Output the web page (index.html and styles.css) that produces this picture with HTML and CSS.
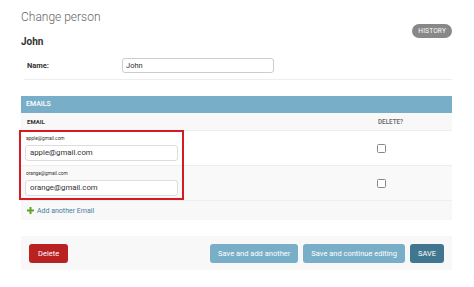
FILE: index.html
```html
<!DOCTYPE html>
<html lang="en">
<head>
<meta charset="UTF-8">
<meta name="viewport" content="width=device-width, initial-scale=1.0">
<title>Change person</title>
<link rel="stylesheet" href="styles.css">
</head>
<body>
  <div id="content">
    <div class="page-head">
      <div>
        <h1>Change person</h1>
        <h2>John</h2>
      </div>
      <a class="history" href="#">HISTORY</a>
    </div>

    <div class="form-row">
      <label class="field-label">Name:</label>
      <input class="name-input" type="text" value="John">
    </div>

    <div class="inline-group">
      <div class="module-head">EMAILS</div>
      <div class="col-head">
        <span class="col-email">EMAIL</span>
        <span class="col-delete">DELETE?</span>
      </div>
      <div class="rows">
        <div class="highlight"></div>
        <div class="email-row">
          <div class="email-cell">
            <div class="original">apple@gmail.com</div>
            <input class="email-input" type="text" value="apple@gmail.com">
          </div>
          <div class="delete-cell"><span class="check"></span></div>
        </div>
        <div class="email-row alt">
          <div class="email-cell">
            <div class="original">orange@gmail.com</div>
            <input class="email-input" type="text" value="orange@gmail.com">
          </div>
          <div class="delete-cell"><span class="check"></span></div>
        </div>
      </div>
      <div class="add-row">
        <svg width="7" height="7" viewBox="0 0 7 7"><path d="M2.5 0h2v2.5H7v2H4.5V7h-2V4.5H0v-2h2.5z" fill="#5fa225"/></svg>
        <a href="#">Add another Email</a>
      </div>
    </div>

    <div class="submit-row">
      <a class="btn delete" href="#">Delete</a>
      <span class="spacer"></span>
      <a class="btn light" href="#">Save and add another</a>
      <a class="btn light" href="#">Save and continue editing</a>
      <a class="btn dark" href="#">SAVE</a>
    </div>
  </div>
</body>
</html>
```

FILE: styles.css
```css
body {
  margin: 0;
  font-family: Roboto, "Liberation Sans", sans-serif;
  background-color: #fff;
  color: #333;
}
#content {
  padding: 8px 22px 0 21px;
}
.page-head {
  display: flex;
  justify-content: space-between;
}
h1 {
  margin: 0;
  font-size: 12px;
  font-weight: 300;
  color: #666;
  line-height: 19px;
}
h2 {
  margin: 9px 0 0 0;
  font-size: 10px;
  font-weight: bold;
  color: #333;
  line-height: 12px;
}
.history {
  align-self: flex-start;
  margin-top: 16px;
  background-color: #888;
  color: #fff;
  font-size: 6.5px;
  text-decoration: none;
  padding: 0 6px;
  height: 14px;
  line-height: 14px;
  border-radius: 7px;
  letter-spacing: 0.2px;
}
.form-row {
  display: flex;
  align-items: center;
  margin: 5px 0 0 3px;
  padding: 5px 0 6px 0;
  border-bottom: 1px solid #eee;
}
.field-label {
  width: 95px;
  padding-left: 3px;
  font-size: 7.5px;
  font-weight: bold;
  color: #333;
}
.name-input {
  width: 152px;
  height: 15px;
  box-sizing: border-box;
  border: 1px solid #ccc;
  border-radius: 3px;
  padding: 0 3px;
  font-family: inherit;
  font-size: 7.5px;
  color: #333;
}
.inline-group {
  margin-top: 16px;
}
.module-head {
  background-color: #79aec8;
  color: #fff;
  font-size: 7px;
  font-weight: 500;
  height: 17px;
  line-height: 17px;
  padding-left: 5px;
}
.col-head {
  display: flex;
  height: 17px;
  align-items: center;
  background-color: #f8f8f8;
  font-size: 6px;
  font-weight: bold;
  border-bottom: 1px solid #eee;
}
.col-email {
  padding-left: 6px;
  width: 351px;
  color: #333;
}
.col-delete {
  color: #666;
  font-weight: 500;
  font-size: 6.3px;
}
.rows {
  position: relative;
}
.highlight {
  position: absolute;
  left: -2px;
  top: -1px;
  width: 165px;
  height: 70px;
  box-sizing: border-box;
  border: 2px solid #d71920;
}
.email-row {
  display: flex;
  align-items: center;
  height: 34px;
  border-bottom: 1px solid #eee;
  background-color: #fff;
}
.email-row.alt {
  background-color: #f9f9f9;
}
.email-cell {
  width: 352px;
  padding-left: 4px;
  box-sizing: border-box;
}
.original {
  font-size: 4.8px;
  color: #333;
  padding-left: 1px;
  margin-bottom: 4px;
}
.email-input {
  display: block;
  width: 153px;
  height: 16px;
  box-sizing: border-box;
  border: 1px solid #ddd;
  border-radius: 3px;
  padding: 0 4px;
  font-family: inherit;
  font-size: 7.8px;
  color: #333;
  background-color: #fff;
}
.delete-cell {
  padding-left: 4px;
}
.check {
  display: block;
  width: 7px;
  height: 7px;
  border: 1px solid #888;
  border-radius: 1.5px;
  background-color: #fff;
}
.add-row {
  display: flex;
  align-items: center;
  gap: 3px;
  height: 19px;
  padding-left: 6px;
  background-color: #f8f8f8;
  font-size: 7px;
}
.add-row a {
  color: #447e9b;
  text-decoration: none;
}
.submit-row {
  display: flex;
  align-items: center;
  gap: 5px;
  margin-top: 16px;
  height: 34px;
  padding: 0 8px 0 8px;
  background-color: #f8f8f8;
}
.spacer {
  flex: 1;
}
.btn {
  height: 19px;
  line-height: 19px;
  padding: 0 8px;
  border-radius: 3px;
  font-size: 7.5px;
  color: #fff;
  text-decoration: none;
}
.btn.delete {
  background-color: #ba2121;
  padding: 0 9px;
}
.btn.light {
  background-color: #79aec8;
}
.btn.dark {
  background-color: #417690;
}
```
